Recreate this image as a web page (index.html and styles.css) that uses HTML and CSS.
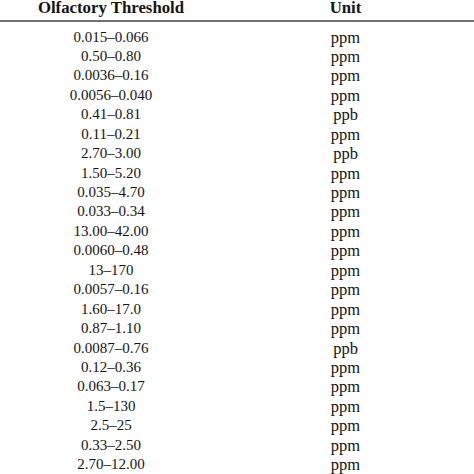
FILE: index.html
```html
<!DOCTYPE html>
<html>
<head>
<meta charset="utf-8">
<link rel="stylesheet" href="styles.css">
</head>
<body>
<div class="table">
  <div class="head">
    <div class="cell">Olfactory Threshold</div>
    <div class="cell">Unit</div>
  </div>
  <div class="body">
    <div class="cell">0.015–0.066</div><div class="cell unit">ppm</div>
    <div class="cell">0.50–0.80</div><div class="cell unit">ppm</div>
    <div class="cell">0.0036–0.16</div><div class="cell unit">ppm</div>
    <div class="cell">0.0056–0.040</div><div class="cell unit">ppm</div>
    <div class="cell">0.41–0.81</div><div class="cell unit">ppb</div>
    <div class="cell">0.11–0.21</div><div class="cell unit">ppm</div>
    <div class="cell">2.70–3.00</div><div class="cell unit">ppb</div>
    <div class="cell">1.50–5.20</div><div class="cell unit">ppm</div>
    <div class="cell">0.035–4.70</div><div class="cell unit">ppm</div>
    <div class="cell">0.033–0.34</div><div class="cell unit">ppm</div>
    <div class="cell">13.00–42.00</div><div class="cell unit">ppm</div>
    <div class="cell">0.0060–0.48</div><div class="cell unit">ppm</div>
    <div class="cell">13–170</div><div class="cell unit">ppm</div>
    <div class="cell">0.0057–0.16</div><div class="cell unit">ppm</div>
    <div class="cell">1.60–17.0</div><div class="cell unit">ppm</div>
    <div class="cell">0.87–1.10</div><div class="cell unit">ppm</div>
    <div class="cell">0.0087–0.76</div><div class="cell unit">ppb</div>
    <div class="cell">0.12–0.36</div><div class="cell unit">ppm</div>
    <div class="cell">0.063–0.17</div><div class="cell unit">ppm</div>
    <div class="cell">1.5–130</div><div class="cell unit">ppm</div>
    <div class="cell">2.5–25</div><div class="cell unit">ppm</div>
    <div class="cell">0.33–2.50</div><div class="cell unit">ppm</div>
    <div class="cell">2.70–12.00</div><div class="cell unit">ppm</div>
  </div>
</div>
</body>
</html>
```

FILE: styles.css
```css
html, body {
  margin: 0;
  padding: 0;
  background: #ffffff;
}
body {
  width: 474px;
  height: 474px;
  overflow: hidden;
  font-family: "Liberation Serif", "Times New Roman", serif;
  color: #141414;
}
.table {
  width: 474px;
}
.head {
  display: grid;
  grid-template-columns: 222px 247px;
  height: 20px;
  border-bottom: 2px solid #6f6f6f;
  font-weight: bold;
  font-size: 16.8px;
  line-height: 14px;
}
.head .cell {
  text-align: center;
  padding-top: 1px;
}
.body {
  display: grid;
  grid-template-columns: 222px 247px;
  grid-auto-rows: 19.45px;
  padding-top: 5.5px;
  font-size: 15px;
  line-height: 19.45px;
}
.body .cell {
  text-align: center;
  white-space: nowrap;
}
.body .unit {
  font-size: 16.5px;
}
```
